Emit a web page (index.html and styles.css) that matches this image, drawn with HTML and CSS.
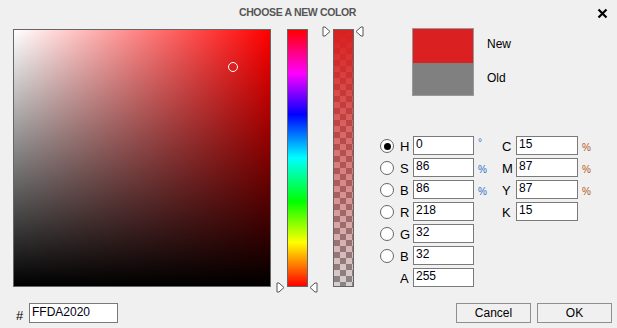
FILE: index.html
```html
<!DOCTYPE html>
<html lang="en">
<head>
	<meta charset="UTF-8">
	<title>Choose a new color</title>
	<link rel="stylesheet" href="styles.css">
</head>
<body>
	<div class="dialog">

		<!-- Title bar -->
		<div class="titlebar">
			<span class="title">CHOOSE A NEW COLOR</span>
			<svg class="close" width="11" height="11" viewBox="0 0 11 11">
				<path d="M1.5 1.5 L9.5 9.5 M9.5 1.5 L1.5 9.5" stroke="#000" stroke-width="2.2" />
			</svg>
		</div>

		<div class="main">
			<!-- Saturation / brightness square -->
			<div class="sv-box">
				<span class="sv-cursor"></span>
			</div>

			<!-- Hue bar -->
			<div class="bar-wrap hue-wrap">
				<div class="bar hue"></div>
				<svg class="arrow arrow-left" width="9" height="11" viewBox="0 0 9 11">
					<path d="M1 1 L1 10 L3 10 L8 5.5 L3 1 Z" fill="#fff" stroke="#555" stroke-width="1" />
				</svg>
				<svg class="arrow arrow-right" width="9" height="11" viewBox="0 0 9 11">
					<path d="M8 1 L8 10 L6 10 L1 5.5 L6 1 Z" fill="#fff" stroke="#555" stroke-width="1" />
				</svg>
			</div>

			<!-- Alpha bar -->
			<div class="bar-wrap alpha-wrap">
				<div class="bar alpha"></div>
				<svg class="arrow arrow-left" width="9" height="11" viewBox="0 0 9 11">
					<path d="M1 1 L1 10 L3 10 L8 5.5 L3 1 Z" fill="#fff" stroke="#555" stroke-width="1" />
				</svg>
				<svg class="arrow arrow-right" width="9" height="11" viewBox="0 0 9 11">
					<path d="M8 1 L8 10 L6 10 L1 5.5 L6 1 Z" fill="#fff" stroke="#555" stroke-width="1" />
				</svg>
			</div>

			<div class="side">
				<!-- New / old preview -->
				<div class="preview-row">
					<div class="preview">
						<div class="swatch-new"></div>
						<div class="swatch-old"></div>
					</div>
					<div class="preview-labels">
						<span>New</span>
						<span>Old</span>
					</div>
				</div>

				<!-- Value fields -->
				<div class="fields">
					<span class="radio checked"></span><label>H</label><input type="text" value="0"><span class="unit deg">°</span>
					<label class="lbl2">C</label><input type="text" value="15"><span class="unit2">%</span>

					<span class="radio"></span><label>S</label><input type="text" value="86"><span class="unit">%</span>
					<label class="lbl2">M</label><input type="text" value="87"><span class="unit2">%</span>

					<span class="radio"></span><label>B</label><input type="text" value="86"><span class="unit">%</span>
					<label class="lbl2">Y</label><input type="text" value="87"><span class="unit2">%</span>

					<span class="radio"></span><label>R</label><input type="text" value="218"><span></span>
					<label class="lbl2">K</label><input type="text" value="15"><span></span>

					<span class="radio"></span><label>G</label><input type="text" value="32"><span></span>
					<span></span><span></span><span></span>

					<span class="radio"></span><label>B</label><input type="text" value="32"><span></span>
					<span></span><span></span><span></span>

					<span></span><label>A</label><input type="text" value="255"><span></span>
					<span></span><span></span><span></span>
				</div>
			</div>
		</div>

		<!-- Footer -->
		<div class="footer">
			<label class="hash">#</label>
			<input type="text" class="hex" value="FFDA2020">
			<div class="buttons">
				<button type="button">Cancel</button>
				<button type="button">OK</button>
			</div>
		</div>

	</div>
</body>
</html>
```

FILE: styles.css
```css
body {
	margin: 0;
	padding: 0;
	background-color: #f0f0f0;
	font-family: "Liberation Sans", Arial, sans-serif;
	font-size: 12px;
	color: #000;
}
.dialog {
	width: 617px;
	height: 328px;
	overflow: hidden;
}

/* Title bar */
.titlebar {
	position: relative;
	height: 29px;
	display: flex;
	justify-content: center;
	padding-right: 22px;
}
.title {
	padding-top: 6px;
	font-size: 10.5px;
	font-weight: bold;
	color: #555;
	letter-spacing: -0.35px;
}
.close {
	position: absolute;
	right: 9px;
	top: 8px;
}

/* Main area */
.main {
	display: flex;
	padding-left: 13px;
	height: 258px;
}
.sv-box {
	position: relative;
	width: 258px;
	height: 258px;
	box-sizing: border-box;
	border: 1px solid #666;
	background:
		linear-gradient(to top, #000, rgba(0,0,0,0)),
		linear-gradient(to right, #fff, #f00);
}
.sv-cursor {
	position: absolute;
	left: 214px;
	top: 32px;
	width: 8px;
	height: 8px;
	border: 1.5px solid #fff;
	border-radius: 50%;
}
.bar-wrap {
	position: relative;
	width: 21px;
	height: 258px;
}
.hue-wrap {
	margin-left: 16px;
}
.alpha-wrap {
	margin-left: 25px;
}
.bar {
	width: 21px;
	height: 258px;
	box-sizing: border-box;
	border: 1px solid #666;
}
.hue {
	background: linear-gradient(to bottom, #f00 0%, #f0f 17%, #00f 33%, #0ff 50%, #0f0 67%, #ff0 83%, #f00 100%);
}
.alpha {
	background:
		linear-gradient(to bottom, rgba(218,32,32,1), rgba(218,32,32,0)),
		conic-gradient(#8a8484 25%, #d6d0d0 0 50%, #8a8484 0 75%, #d6d0d0 0) 0 0 / 12px 12px;
}
.arrow {
	position: absolute;
}
.hue-wrap .arrow {
	top: 253px;
}
.hue-wrap .arrow-left {
	left: -11px;
}
.hue-wrap .arrow-right {
	left: 22px;
}
.alpha-wrap .arrow {
	top: -3px;
}
.alpha-wrap .arrow-left {
	left: -11px;
}
.alpha-wrap .arrow-right {
	left: 22px;
}

/* Side panel */
.side {
	margin-left: 27px;
	display: flex;
	flex-direction: column;
}
.preview-row {
	display: flex;
	margin-left: 31px;
	margin-top: -1px;
}
.preview {
	width: 62px;
	height: 68px;
	box-sizing: border-box;
	border: 1px solid #999;
	display: flex;
	flex-direction: column;
}
.swatch-new {
	height: 34px;
	background-color: #da2020;
}
.swatch-old {
	flex: 1;
	background-color: #808080;
}
.preview-labels {
	display: flex;
	flex-direction: column;
	margin-left: 13px;
	padding-top: 9px;
	gap: 20px;
	line-height: 14px;
}

.fields {
	margin-top: 40px;
	display: grid;
	grid-template-columns: 14px 18px 61px 26px 16px 62px 18px;
	grid-auto-rows: 19px;
	row-gap: 3px;
	align-items: center;
}
.fields label {
	padding-left: 5px;
	padding-top: 2px;
	font-size: 13px;
}
.fields .lbl2 {
	padding-left: 2px;
}
input[type="text"] {
	width: 100%;
	height: 19px;
	box-sizing: border-box;
	border: 1px solid #7a7a7a;
	background-color: #fff;
	padding: 0 2px 3px;
	margin: 0;
	font-family: "Liberation Sans", Arial, sans-serif;
	font-size: 12px;
	color: #001;
}
.unit {
	padding-left: 4px;
	padding-top: 3px;
	color: #2a6fc9;
	font-size: 10px;
}
.unit.deg {
	padding-top: 0;
	margin-top: -6px;
}
.unit2 {
	padding-left: 4px;
	padding-top: 3px;
	color: #b4561e;
	font-size: 10px;
}
.radio {
	width: 14px;
	height: 14px;
	box-sizing: border-box;
	border: 1px solid #666;
	border-radius: 50%;
	background-color: #fff;
	margin-left: -1px;
	margin-top: 1px;
	display: flex;
	justify-content: center;
	align-items: center;
}
.radio.checked::after {
	content: "";
	width: 7px;
	height: 7px;
	border-radius: 50%;
	background-color: #000;
}

/* Footer */
.footer {
	display: flex;
	align-items: center;
	margin-top: 16px;
	padding-left: 16px;
	padding-right: 5px;
}
.hash {
	width: 13px;
	padding-top: 4px;
	font-size: 13px;
}
.footer .hex {
	width: 89px;
	height: 20px;
}
.buttons {
	margin-left: auto;
	display: flex;
	gap: 6px;
}
button {
	width: 75px;
	height: 20px;
	box-sizing: border-box;
	border: 1px solid #8f8f8f;
	background-color: #f0f0f0;
	font-family: "Liberation Sans", Arial, sans-serif;
	font-size: 12px;
	color: #000;
	padding: 0;
}
```
